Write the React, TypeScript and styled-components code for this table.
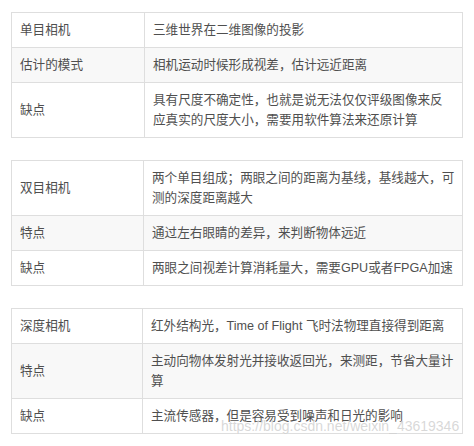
import { createGlobalStyle, styled } from 'styled-components';

interface Row {
  label: string;
  lines: string[];
}

interface Section {
  labelWidth: number;
  rows: Row[];
}

const sections: Section[] = [
  {
    labelWidth: 133,
    rows: [
      { label: '单目相机', lines: ['三维世界在二维图像的投影'] },
      { label: '估计的模式', lines: ['相机运动时候形成视差，估计远近距离'] },
      {
        label: '缺点',
        lines: ['具有尺度不确定性，也就是说无法仅仅评级图像来反', '应真实的尺度大小，需要用软件算法来还原计算'],
      },
    ],
  },
  {
    labelWidth: 132,
    rows: [
      { label: '双目相机', lines: ['两个单目组成；两眼之间的距离为基线，基线越大，可', '测的深度距离越大'] },
      { label: '特点', lines: ['通过左右眼睛的差异，来判断物体远近'] },
      { label: '缺点', lines: ['两眼之间视差计算消耗量大，需要GPU或者FPGA加速'] },
    ],
  },
  {
    labelWidth: 131,
    rows: [
      { label: '深度相机', lines: ['红外结构光，Time of Flight 飞时法物理直接得到距离'] },
      { label: '特点', lines: ['主动向物体发射光并接收返回光，来测距，节省大量计', '算'] },
      { label: '缺点', lines: ['主流传感器，但是容易受到噪声和日光的影响'] },
    ],
  },
];

const GlobalStyle = createGlobalStyle`
  body {
    margin: 0;
    background: #ffffff;
    font-family: "Liberation Sans", "Noto Sans CJK SC", sans-serif;
  }
`;

const Page = styled.div`
  position: relative;
  width: 474px;
  height: 446px;
  padding: 12px 0 0 11px;
  box-sizing: border-box;
  overflow: hidden;
`;

const Table = styled.table`
  width: 452px;
  border-collapse: collapse;
  table-layout: fixed;
  margin-bottom: 22px;
  font-size: 12.6px;
  line-height: 20px;
  color: #4f4f4f;
`;

const Col = styled.col<{ $width: number }>`
  width: ${(p) => p.$width}px;
`;

const Tr = styled.tr`
  background: #ffffff;

  &:nth-child(even) {
    background: #f8f8f8;
  }
`;

const Cell = styled.td`
  border: 1px solid #dedede;
  padding: 7px 8px;
  vertical-align: middle;
  white-space: nowrap;
  overflow: hidden;
`;

// faint site watermark lying over the last table row
const Watermark = styled.div`
  position: absolute;
  left: 221px;
  top: 418px;
  font-family: "Liberation Sans", sans-serif;
  font-size: 14px;
  color: rgba(190, 190, 190, 0.6);
  text-shadow: 0 0 1px rgba(255, 255, 255, 0.8);
  pointer-events: none;
`;

function InfoTable({ section }: { section: Section }) {
  return (
    <Table>
      <colgroup>
        <Col $width={section.labelWidth} />
        <col />
      </colgroup>
      <tbody>
        {section.rows.map((row, i) => (
          <Tr key={i}>
            <Cell>{row.label}</Cell>
            <Cell>
              {row.lines.map((line, j) => (
                <div key={j}>{line}</div>
              ))}
            </Cell>
          </Tr>
        ))}
      </tbody>
    </Table>
  );
}

export default function App() {
  return (
    <>
      <GlobalStyle />
      <Page>
        {sections.map((section, i) => (
          <InfoTable key={i} section={section} />
        ))}
        <Watermark>https://blog.csdn.net/weixin_43619346</Watermark>
      </Page>
    </>
  );
}
